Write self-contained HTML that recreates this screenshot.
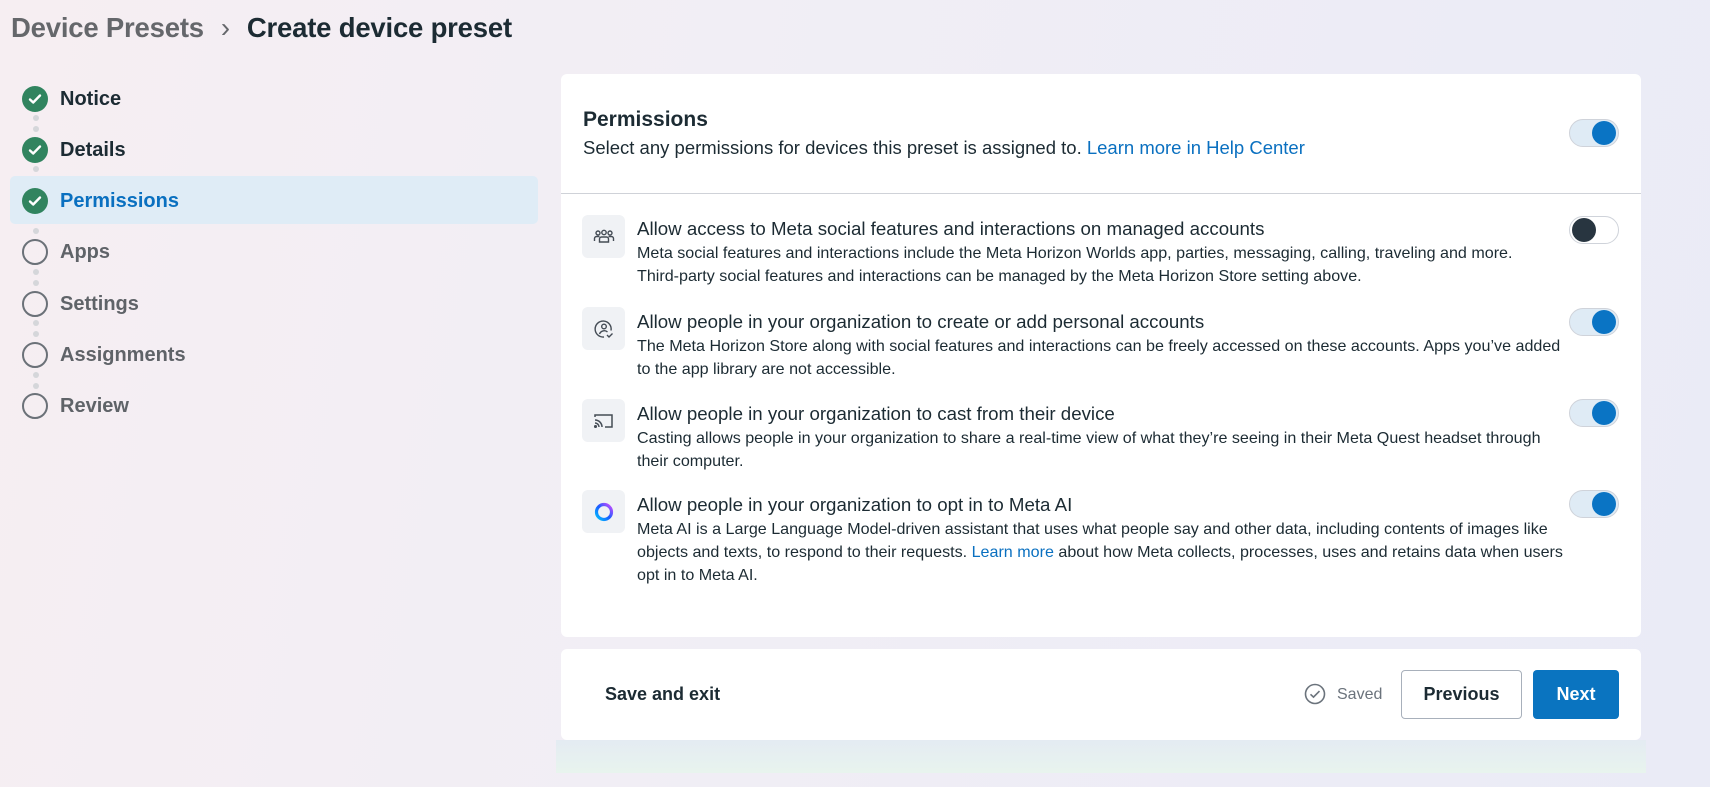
<!DOCTYPE html>
<html><head><meta charset="utf-8"><style>
*{box-sizing:border-box;margin:0;padding:0}
body{width:1710px;height:787px;overflow:hidden;font-family:"Liberation Sans",sans-serif;background:linear-gradient(100deg,#f6eef2 0%,#f1eef5 40%,#eaebf6 100%);position:relative;color:#1c2b33}
.abs{position:absolute}
.crumb{left:11px;top:12px;font-size:27.5px;font-weight:bold;white-space:nowrap;letter-spacing:-0.2px}
.crumb .a{color:#65676b}
.step{position:absolute;left:22px;height:28px;display:flex;align-items:center;font-size:20px;font-weight:bold;color:#1c2b33}
.step .c{width:26px;height:26px;border-radius:50%;margin-right:12px;flex:none}
.done .c{background:#31845f;display:flex;align-items:center;justify-content:center}
.todo .c{border:2.5px solid #6b7178}
.todo{color:#5f6368}
.dot{position:absolute;left:33px;width:6px;height:6px;border-radius:50%;background:#d5d6da}
.card{background:#fff;border-radius:6px}
.title{font-size:21px;font-weight:bold}
.sub{font-size:18.5px;color:#1c2b33}
a{color:#0a70c0;text-decoration:none}
.row .ib{position:absolute;left:0;width:43px;height:43px;border-radius:6px;background:#f0f2f5;display:flex;align-items:center;justify-content:center}
.row .t{position:absolute;left:55px;font-size:18.7px;white-space:nowrap;color:#1c2b33}
.row .d{position:absolute;left:55px;font-size:16.1px;line-height:23px;color:#1c2b33;width:930px}
.tg{position:absolute;width:50px;height:28px;border-radius:14px;border:1px solid #cfd3da;background:#dfebf5}
.tg::after{content:"";position:absolute;right:2px;top:1px;width:24px;height:24px;border-radius:50%;background:#0a74c4}
.tg.off{background:#fff}
.tg.off::after{left:2px;right:auto;background:#283540}
.btn{position:absolute;height:49px;border-radius:4px;display:flex;align-items:center;justify-content:center;font-size:18px;font-weight:bold}
</style></head><body>
<div class="abs crumb"><span class="a">Device Presets</span><span style="color:#65676b;font-weight:normal;margin:0 17px 0 17px">&#x203A;</span>Create device preset</div>

<div class="abs" style="left:10px;top:176px;width:528px;height:48px;background:#dfecf6;border-radius:5px"></div>
<div class="step done" style="top:85px"><span class="c"><svg width="16" height="16" viewBox="0 0 16 16"><path d="M3 8.5l3.2 3L13 4.5" fill="none" stroke="#fff" stroke-width="2.4" stroke-linecap="round" stroke-linejoin="round"/></svg></span>Notice</div>
<div class="dot" style="top:115px"></div><div class="dot" style="top:126px"></div>
<div class="step done" style="top:136px"><span class="c"><svg width="16" height="16" viewBox="0 0 16 16"><path d="M3 8.5l3.2 3L13 4.5" fill="none" stroke="#fff" stroke-width="2.4" stroke-linecap="round" stroke-linejoin="round"/></svg></span>Details</div>
<div class="dot" style="top:166px"></div>
<div class="step done" style="top:187px;color:#0a70c0"><span class="c"><svg width="16" height="16" viewBox="0 0 16 16"><path d="M3 8.5l3.2 3L13 4.5" fill="none" stroke="#fff" stroke-width="2.4" stroke-linecap="round" stroke-linejoin="round"/></svg></span>Permissions</div>
<div class="dot" style="top:228px"></div>
<div class="step todo" style="top:238px"><span class="c"></span>Apps</div>
<div class="dot" style="top:269px"></div><div class="dot" style="top:280px"></div>
<div class="step todo" style="top:290px"><span class="c"></span>Settings</div>
<div class="dot" style="top:320px"></div><div class="dot" style="top:331px"></div>
<div class="step todo" style="top:341px"><span class="c"></span>Assignments</div>
<div class="dot" style="top:372px"></div><div class="dot" style="top:383px"></div>
<div class="step todo" style="top:392px"><span class="c"></span>Review</div>

<div class="abs card" style="left:561px;top:74px;width:1080px;height:563px">
  <div class="abs title" style="left:22px;top:34px">Permissions</div>
  <div class="abs sub" style="left:22px;top:63px">Select any permissions for devices this preset is assigned to. <a>Learn more in Help Center</a></div>
  <div class="tg" style="left:1008px;top:45px"></div>
  <div class="abs" style="left:0;top:119px;width:1080px;height:1px;background:#cfd2d8"></div>

  <div class="abs row" style="left:21px;top:141px;width:1050px">
    <div class="ib" style="top:0"><svg width="22" height="16" viewBox="0 0 22 16" fill="none" stroke="#444c55" stroke-width="1.4"><circle cx="5" cy="4" r="2"/><circle cx="11" cy="3.5" r="2.2"/><circle cx="17" cy="4" r="2"/><path d="M1.5 12v-2.5a2 2 0 012-2h3M20.5 12v-2.5a2 2 0 00-2-2h-3M6.5 13v-3a2 2 0 012-2h5a2 2 0 012 2v3z"/></svg></div>
    <div class="t" style="top:3px">Allow access to Meta social features and interactions on managed accounts</div>
    <div class="d" style="top:27px">Meta social features and interactions include the Meta Horizon Worlds app, parties, messaging, calling, traveling and more.<br>Third-party social features and interactions can be managed by the Meta Horizon Store setting above.</div>
  </div>
  <div class="tg off" style="left:1008px;top:142px"></div>

  <div class="abs row" style="left:21px;top:233px;width:1050px">
    <div class="ib" style="top:0"><svg width="22" height="22" viewBox="0 0 22 22" fill="none" stroke="#444c55" stroke-width="1.4"><path d="M18 12.5A8 8 0 1011 19"/><circle cx="11" cy="8.5" r="2.3"/><path d="M6.5 16a5 5 0 018 -2"/><path d="M14 17l2 2 3.5-3.5"/></svg></div>
    <div class="t" style="top:4px">Allow people in your organization to create or add personal accounts</div>
    <div class="d" style="top:28px">The Meta Horizon Store along with social features and interactions can be freely accessed on these accounts. Apps you’ve added to the app library are not accessible.</div>
  </div>
  <div class="tg" style="left:1008px;top:234px"></div>

  <div class="abs row" style="left:21px;top:325px;width:1050px">
    <div class="ib" style="top:0"><svg width="22" height="18" viewBox="0 0 22 18" fill="none" stroke="#444c55" stroke-width="1.5"><path d="M2 5V3h17v12h-7"/><path d="M2 8a7 7 0 017 7M2 11a4 4 0 014 4"/><circle cx="2.5" cy="14.5" r="0.8" fill="#444c55"/></svg></div>
    <div class="t" style="top:4px">Allow people in your organization to cast from their device</div>
    <div class="d" style="top:28px">Casting allows people in your organization to share a real-time view of what they’re seeing in their Meta Quest headset through their computer.</div>
  </div>
  <div class="tg" style="left:1008px;top:325px"></div>

  <div class="abs row" style="left:21px;top:416px;width:1050px">
    <div class="ib" style="top:0"><svg width="22" height="22" viewBox="0 0 22 22"><defs><linearGradient id="g" x1="0" y1="1" x2="1" y2="0"><stop offset="0" stop-color="#00c2ff"/><stop offset="0.5" stop-color="#1a5cff"/><stop offset="1" stop-color="#d14cff"/></linearGradient></defs><circle cx="11" cy="11" r="7.5" fill="none" stroke="url(#g)" stroke-width="3.2"/></svg></div>
    <div class="t" style="top:4px">Allow people in your organization to opt in to Meta AI</div>
    <div class="d" style="top:28px">Meta AI is a Large Language Model-driven assistant that uses what people say and other data, including contents of images like objects and texts, to respond to their requests. <a>Learn more</a> about how Meta collects, processes, uses and retains data when users opt in to Meta AI.</div>
  </div>
  <div class="tg" style="left:1008px;top:416px"></div>
</div>

<div class="abs" style="left:556px;top:740px;width:1090px;height:33px;background:linear-gradient(#e4ebf2,#e8f4ee)"></div>
<div class="abs card" style="left:561px;top:649px;width:1080px;height:91px">
  <div class="abs" style="left:44px;top:35px;font-size:18px;font-weight:bold;color:#1c2b33">Save and exit</div>
  <svg class="abs" style="left:743px;top:34px" width="22" height="22" viewBox="0 0 22 22" fill="none" stroke="#6b737c" stroke-width="1.6"><circle cx="11" cy="11" r="9.5"/><path d="M6.5 11.3l3 2.8 6-6"/></svg>
  <div class="abs" style="left:776px;top:37px;font-size:16px;color:#6b737c">Saved</div>
  <div class="btn" style="left:840px;top:21px;width:121px;border:1px solid #a8b0bb;color:#1c2b33;background:#fff">Previous</div>
  <div class="btn" style="left:972px;top:21px;width:86px;background:#0a74c0;color:#fff">Next</div>
</div>
</body></html>
